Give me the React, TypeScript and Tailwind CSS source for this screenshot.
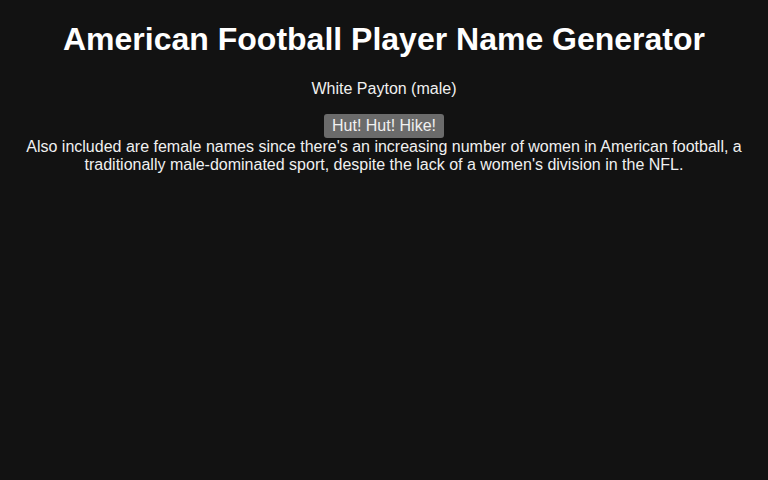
import React, { useState } from 'react';

const names = [
  { name: 'White Payton', gender: 'male' },
  { name: 'Brooks Tanner', gender: 'male' },
  { name: 'Riley Jordan', gender: 'female' },
];

export default function App() {
  const [idx, setIdx] = useState(0);
  const current = names[idx];

  return (
    <div className="min-h-screen bg-[#121212] text-[#f0f0f0] text-center font-['Liberation_Sans',Arial,sans-serif] text-base leading-[18px]">
      <h1 className="pt-[21px] pb-[22px] text-[32px] leading-[37px] font-bold text-white">
        American Football Player Name Generator
      </h1>
      <div className="pb-4">
        {current.name} ({current.gender})
      </div>
      <button
        onClick={() => setIdx((idx + 1) % names.length)}
        className="h-[24px] px-2 rounded-[3px] bg-[#6b6b6b] text-[#f0f0f0] text-base leading-[18px]"
      >
        Hut! Hut! Hike!
      </button>
      <p className="px-6">
        Also included are female names since there's an increasing number of women in American football, a
        traditionally male-dominated sport, despite the lack of a women's division in the NFL.
      </p>
    </div>
  );
}
